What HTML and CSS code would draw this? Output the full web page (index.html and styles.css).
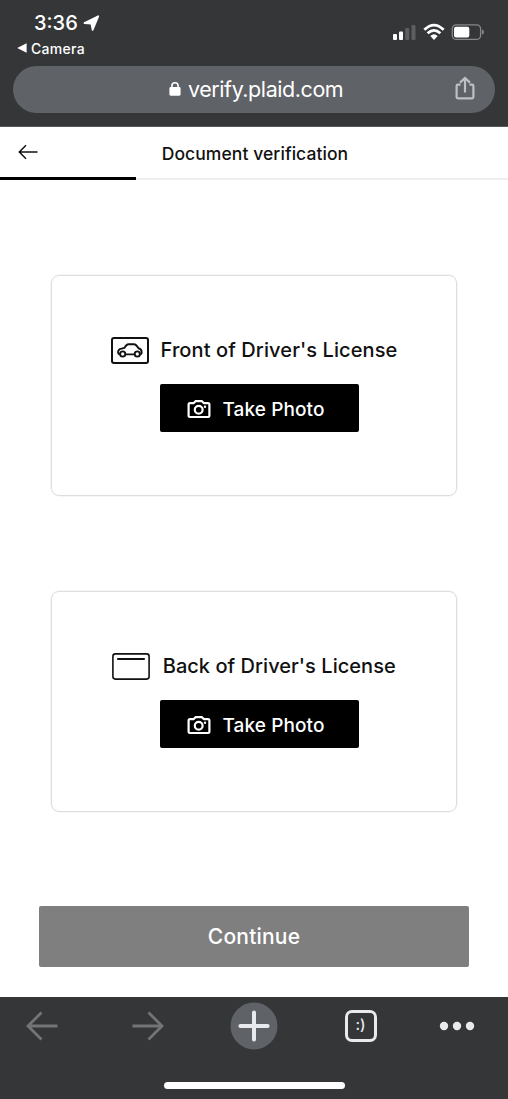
FILE: index.html
```html
<!DOCTYPE html>
<html lang="en">
<head>
<meta charset="utf-8">
<meta name="viewport" content="width=device-width, initial-scale=1">
<title>Document verification</title>
<link rel="stylesheet" href="styles.css">
</head>
<body>
<div class="phone">
  <header class="chrome">
    <div class="status">
      <div class="status-left">
        <div class="clock"><span class="time">3:36</span>
          <svg class="location" width="17" height="17" viewBox="0 0 17 17"><path d="M15.200 1.300 9.600 14.800 8.400 8.500 1.500 8Z" fill="#fff" stroke="#fff" stroke-width="1.800" stroke-linejoin="round"/></svg>
        </div>
        <div class="back-app">
          <svg width="10" height="10" viewBox="0 0 10 10"><path d="M.2 5 9.6.3v9.4Z" fill="#fff"/></svg>
          <span class="camera-label">Camera</span>
        </div>
      </div>
      <svg class="signals" width="92" height="18" viewBox="0 0 92 18">
        <g fill="#fff"><rect x="0" y="11" width="4" height="6" rx="1"/><rect x="6" y="8.5" width="4" height="8.5" rx="1"/></g>
        <g fill="#5d5e60"><rect x="12.200" y="5" width="4" height="12" rx="1"/><rect x="18.500" y="2" width="4" height="15" rx="1"/></g>
        <g fill="none" stroke="#fff" stroke-width="2.7"><path d="M31.3 6.8Q41-2.6 50.700 6.800"/><path d="M34.600 10.300Q41 4.300 47.400 10.300"/></g>
        <path d="M37.300 13Q41 9.700 44.700 13L41 16.900Z" fill="#fff"/>
        <rect x="59.300" y="1.800" width="28.300" height="14.600" rx="4" fill="none" stroke="#87888a" stroke-width="1.300"/>
        <rect x="61" y="3.700" width="15.300" height="10.800" rx="2" fill="#fff"/>
        <path d="M89 6.600Q91 7 91 9.100T89 11.600Z" fill="#87888a"/>
      </svg>
    </div>
    <div class="address">
      <svg class="lock" width="12" height="14" viewBox="0 0 12 14"><rect x=".4" y="5" width="11.200" height="8.700" rx="1.400" fill="#fff"/><path d="M2.900 6V3.900a3.100 3.100 0 0 1 6.200 0V6" fill="none" stroke="#fff" stroke-width="1.600"/></svg>
      <span class="url">verify.plaid.com</span>
      <svg class="share" width="20" height="24" viewBox="0 0 20 24" fill="none" stroke="#bfc0c3" stroke-width="2.200"><path d="M5.500 8.700H2.900Q1.600 8.700 1.600 10V21Q1.600 22.300 2.900 22.300H17.100Q18.400 22.300 18.400 21V10Q18.400 8.700 17.100 8.700H14.500M10 16.500V2M5 6.600 10 1.900 15 6.600"/></svg>
    </div>
  </header>

  <main class="page">
    <div class="titlebar">
      <svg class="back" width="20" height="16" viewBox="0 0 20 16" fill="none" stroke="#111" stroke-width="1.500"><path d="M19.500 8H1.300M8 1.300 1.300 8 8 14.700"/></svg>
      <h1 class="title">Document verification</h1>
    </div>
    <div class="track"><div class="progress"></div></div>

    <section class="card">
      <div class="card-heading">
        <svg class="front-icon" width="38" height="27" viewBox="0 0 38 27" fill="none" stroke="#111" stroke-width="2"><rect x="1" y="1" width="36" height="25" rx="2"/><path stroke-width="1.900" stroke-linejoin="round" d="M8.800 17.500Q7 16.900 7.100 15.500 7 12.200 10.500 11.600L13.500 10.900Q15.500 7.300 17.500 7.300H23Q25 7.300 27.500 11.300 30.700 12 30.700 15.500 30.800 17 29.200 17.500M14.600 17.400H23.400"/><circle cx="11.700" cy="17" r="2.600" stroke-width="1.900"/><circle cx="26.300" cy="17" r="2.600" stroke-width="1.900"/></svg>
        <h2 class="label front">Front of Driver's License</h2>
      </div>
      <button class="photo" type="button">
        <svg width="24" height="20" viewBox="0 0 24 20" fill="none" stroke="#fff" stroke-width="2.200"><path stroke-linejoin="round" d="M3 4.200H6.500L8.500 2.200H15L17 4.200H21Q22.400 4.200 22.400 5.600V16.600Q22.400 18 21 18H3Q1.600 18 1.600 16.600V5.600Q1.600 4.200 3 4.200Z"/><circle cx="11.700" cy="10.700" r="3.900"/><circle cx="18" cy="7.800" r="1.200" fill="#fff" stroke="none"/></svg>
        <span class="photo-label">Take Photo</span>
      </button>
    </section>

    <section class="card">
      <div class="card-heading">
        <svg width="38" height="27" viewBox="0 0 38 27" fill="none" stroke="#111" stroke-width="1.600"><rect x=".9" y=".9" width="36.200" height="25.200" rx="2.500"/><path stroke-width="2" d="M5.200 6H32.800"/></svg>
        <h2 class="label rear">Back of Driver's License</h2>
      </div>
      <button class="photo" type="button">
        <svg width="24" height="20" viewBox="0 0 24 20" fill="none" stroke="#fff" stroke-width="2.200"><path stroke-linejoin="round" d="M3 4.200H6.500L8.500 2.200H15L17 4.200H21Q22.400 4.200 22.400 5.600V16.600Q22.400 18 21 18H3Q1.600 18 1.600 16.600V5.600Q1.600 4.200 3 4.200Z"/><circle cx="11.700" cy="10.700" r="3.900"/><circle cx="18" cy="7.800" r="1.200" fill="#fff" stroke="none"/></svg>
        <span class="photo-label">Take Photo</span>
      </button>
    </section>

    <button class="continue" type="button" disabled>Continue</button>
  </main>

  <footer class="toolbar">
    <nav class="tools">
      <svg width="32" height="30" viewBox="0 0 32 30" fill="none" stroke="#737476" stroke-width="2.800"><path d="M31.500 15H2.500M15.500 1.500 2 15 15.500 28.500"/></svg>
      <svg width="32" height="30" viewBox="0 0 32 30" fill="none" stroke="#737476" stroke-width="2.800"><path d="M.5 15H29.500M16.500 1.500 30 15 16.500 28.500"/></svg>
      <svg width="48" height="48" viewBox="0 0 48 48"><circle cx="24" cy="24" r="23.500" fill="#5f6368"/><path d="M10.400 24H37.600M24 10.400V37.600" stroke="#e9eaee" stroke-width="4" stroke-linecap="round"/></svg>
      <span class="tabs">:)</span>
      <svg width="36" height="10" viewBox="0 0 36 10" fill="#e9eaee"><circle cx="5" cy="5" r="4.200"/><circle cx="18" cy="5" r="4.200"/><circle cx="31" cy="5" r="4.200"/></svg>
    </nav>
    <div class="home-bar"></div>
  </footer>
</div>
</body>
</html>
```
FILE: styles.css
```css
* { box-sizing: border-box; }
body { margin: 0; font-family: Inter, "Liberation Sans", sans-serif; background: #fff; }
svg { display: block; flex: none; }
h1, h2 { margin: 0; }
button { border: 0; font-family: inherit; padding: 0; }
span, h1, h2 { white-space: nowrap; }
.phone { width: 508px; height: 1099px; display: flex; flex-direction: column; overflow: hidden; }

.chrome { height: 127px; flex: none; background: #353638; border-bottom: 1px solid #59595b; color: #fff; }
.status { height: 66px; display: flex; justify-content: space-between; padding: 11px 23px 0 17px; }
.clock { display: flex; align-items: center; height: 24px; padding-left: 17px; gap: 6px; }
.time { font-size: 20px; font-weight: 500; }
.location { margin-left: -1px; }
.back-app { display: flex; align-items: center; height: 20px; margin-top: 3px; gap: 4px; }
.camera-label { font-size: 14px; font-weight: 500; letter-spacing: .3px; }
.signals { margin-top: 12px; }
.address { height: 47px; margin: 0 13px; border-radius: 24px; background: #5f6267; display: flex; align-items: center; padding: 0 20px 0 156px; }
.lock { margin-top: -1px; }
.url { font-size: 21.500px; letter-spacing: -.43px; margin: -2px 0 0 7px; }
.share { margin-left: auto; margin-top: -3px; }

.page { flex: 1; display: flex; flex-direction: column; }
.titlebar { height: 50px; flex: none; display: grid; grid-template-columns: 76px 1fr 74px; align-items: center; padding-top: 2px; }
.back { margin-left: 18px; margin-top: -2px; }
.title { font-size: 17.500px; font-weight: 500; letter-spacing: .07px; color: #111; text-align: center; }
.track { height: 3px; flex: none; box-shadow: inset 0 -2px #eee; }
.progress { width: 135.500px; height: 3px; background: #000; }
.card { width: 406px; height: 221px; flex: none; margin: 95px 0 0 51px; border: 1px solid #dedede; border-radius: 8px; box-shadow: 0 0 0 .5px #eee; display: flex; flex-direction: column; align-items: center; padding-top: 58px; }
.track + .card { margin-top: 94.500px; }
.card-heading { display: flex; align-items: center; height: 34px; gap: 12.500px; }
.front-icon { margin-top: -1px; margin-right: -.5px; }
.label { font-size: 20px; font-weight: 500; color: #111; margin-top: -2px; }
.front { letter-spacing: .1px; }
.rear { letter-spacing: .04px; }
.photo { width: 199px; height: 48px; margin: 16.500px 0 0 10px; background: #000; border-radius: 2px; color: #fff; display: flex; align-items: center; padding: 1px 0 0 27px; gap: 12px; }
.photo-label { font-size: 19px; font-weight: 500; letter-spacing: .1px; padding-top: 1px; }
.continue { width: 430px; height: 61px; flex: none; margin: 94.500px 0 0 39px; background: #7f7f7f; border-radius: 2px; color: #fff; font-size: 21px; font-weight: 500; letter-spacing: .2px; }

.toolbar { height: 102px; flex: none; background: #353638; display: flex; flex-direction: column; align-items: center; }
.tools { align-self: stretch; height: 58px; display: grid; grid-template-columns: 84px 128px 84px 129px 64px; justify-items: center; align-items: center; }
.tabs { width: 32px; height: 32px; border: 3px solid #e9eaee; border-radius: 7px; color: #e9eaee; font-size: 15px; font-weight: 500; line-height: 24px; text-align: center; }
.home-bar { width: 181px; height: 7px; border-radius: 4px; background: #fff; margin-top: 27px; }
```
